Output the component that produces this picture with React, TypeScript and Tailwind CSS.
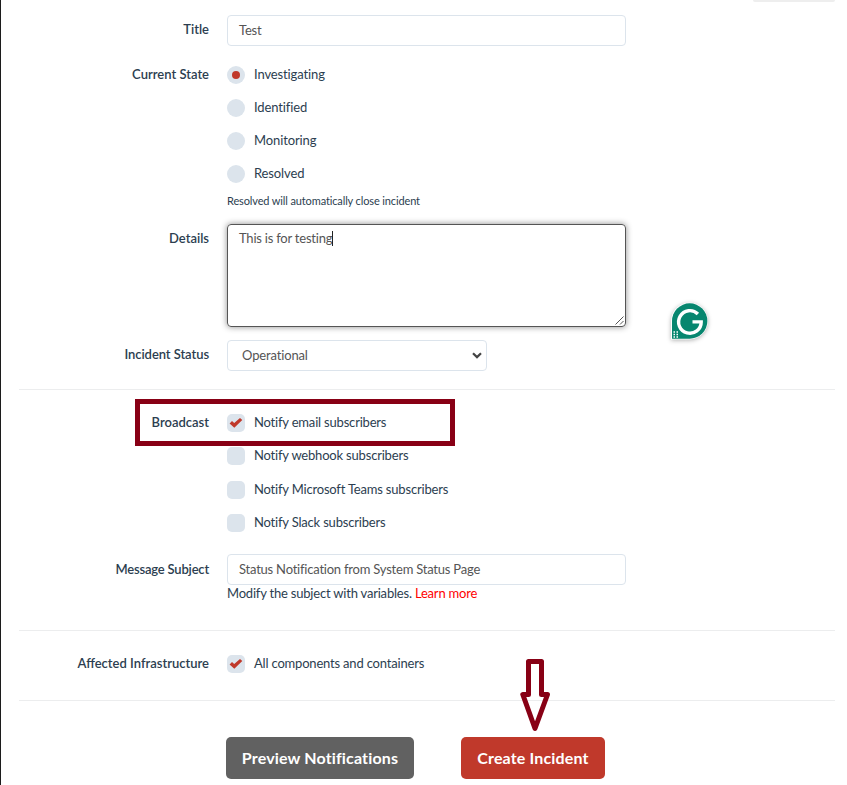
import React, { useState } from "react";

const STATES = ["Investigating", "Identified", "Monitoring", "Resolved"];

const CHANNELS: { id: string; label: string; row: string }[] = [
  { id: "email",   label: "Notify email subscribers",           row: "h-[33px]" },
  { id: "webhook", label: "Notify webhook subscribers",         row: "h-[34px]" },
  { id: "teams",   label: "Notify Microsoft Teams subscribers", row: "h-[33px]" },
  { id: "slack",   label: "Notify Slack subscribers",           row: "h-[18px]" },
];

function Row({ label, labelCls, className, children }: {
  label: string;
  labelCls: string;
  className: string;
  children: React.ReactNode;
}) {
  return (
    <div className={`flex items-start gap-[18px] ${className}`}>
      <div className={`w-[208px] flex-shrink-0 text-right font-semibold leading-[18px] text-[#2c3e50] ${labelCls}`}>
        {label}
      </div>
      <div>{children}</div>
    </div>
  );
}

function Radio({ label, checked, onSelect }: { label: string; checked: boolean; onSelect: () => void }) {
  return (
    <button type="button" role="radio" aria-checked={checked} onClick={onSelect} className="flex items-start gap-[9px] h-[33px]">
      <span className="flex items-center justify-center w-[18px] h-[18px] rounded-full bg-[#dce4ec]">
        {checked && <span className="w-2 h-2 rounded-full bg-[#c0392b]" />}
      </span>
      <span className="-mt-px leading-[18px] tracking-[-0.12px]">{label}</span>
    </button>
  );
}

function Check({ label, checked, onToggle, className }: {
  label: string;
  checked: boolean;
  onToggle: () => void;
  className: string;
}) {
  return (
    <button type="button" role="checkbox" aria-checked={checked} onClick={onToggle} className={`flex items-start gap-[9px] ${className}`}>
      <span className="flex items-center justify-center w-[18px] h-[18px] rounded-[5px] bg-[#dce4ec]">
        {checked && (
          <svg width="14" height="12" viewBox="0 0 14 12">
            <path d="M0.6 6.4 3 4.1 5.2 6 11 0.9 13.3 3 5.3 10.8Z" fill="#c0392b" />
          </svg>
        )}
      </span>
      <span className="-mt-px leading-[18px] tracking-[-0.19px]">{label}</span>
    </button>
  );
}

export default function App() {
  const [state, setState] = useState("Investigating");
  const [channels, setChannels] = useState<string[]>(["email"]);
  const [all, setAll] = useState(true);

  const toggle = (id: string) =>
    setChannels(c => (c.includes(id) ? c.filter(x => x !== id) : [...c, id]));

  return (
    <div className="relative w-[847px] h-[785px] overflow-hidden border-l border-[#1c1c1c] bg-white font-['Lato',sans-serif] text-[13px] text-[#2c3e50]">
      <div className="ml-[752px] w-[82px] h-[2px] rounded-b-sm bg-[#eeeeee]" />

      <Row label="Title" labelCls="mt-[5px]" className="mt-[13px] h-[51px]">
        <div className="flex items-center w-[399px] h-[31px] px-[11px] rounded border border-[#dce4ec] text-[#555555] tracking-[-0.2px]">Test</div>
      </Row>

      <Row label="Current State" labelCls="-mt-px" className="h-[158px]">
        {STATES.map(s => (
          <Radio key={s} label={s} checked={state === s} onSelect={() => setState(s)} />
        ))}
        <p className="-mt-[5px] text-[11px] leading-[16px] tracking-[-0.13px]">Resolved will automatically close incident</p>
      </Row>

      <Row label="Details" labelCls="mt-[5px]" className="h-[116px]">
        <div className="flex w-[399px] h-[103px] px-[11px] pt-[4px] rounded border border-[#555555] shadow-[0_0_6px_rgba(0,0,0,0.45)] text-[#555555]">
          <span className="leading-[18px] tracking-[-0.22px]">This is for testing</span>
          <span className="w-px h-[15px] mt-[2px] bg-[#222222]" />
          <svg className="ml-auto mt-auto -mr-[10px] mb-px" width="9" height="9" viewBox="0 0 9 9">
            <path d="M0.5 8.5 8.5 0.5M5 8.5 8.5 5" stroke="#555555" strokeWidth="1" />
          </svg>
        </div>
      </Row>

      <Row label="Incident Status" labelCls="mt-[5px] tracking-[-0.07px]" className="h-[49px]">
        <div className="flex items-center justify-between w-[260px] h-[31px] pl-[14px] pr-1 rounded border border-[#dce4ec] text-[#555555] tracking-[-0.15px]">
          Operational
          <svg width="10" height="7" viewBox="0 0 10 7" fill="none">
            <path d="M1 1.2 5 5.1 9 1.2" stroke="#444444" strokeWidth="2.2" />
          </svg>
        </div>
      </Row>
      <div className="ml-[18px] w-[816px] h-px bg-[#ecedee]" />

      <Row label="Broadcast" labelCls="-mt-px" className="mt-6 h-[140px]">
        {CHANNELS.map(c => (
          <Check key={c.id} label={c.label} checked={channels.includes(c.id)} onToggle={() => toggle(c.id)} className={c.row} />
        ))}
      </Row>

      <Row label="Message Subject" labelCls="mt-[6px] tracking-[-0.18px]" className="h-[76px]">
        <div className="flex items-center w-[399px] h-[31px] px-[11px] rounded border border-[#dce4ec] text-[#555555] tracking-[-0.22px]">
          Status Notification from System Status Page
        </div>
        <p className="-mt-px leading-[18px] tracking-[-0.2px]">
          Modify the subject with variables. <a className="text-[#ff0000]">Learn more</a>
        </p>
      </Row>
      <div className="ml-[18px] w-[816px] h-px bg-[#ecedee]" />

      <Row label="Affected Infrastructure" labelCls="-mt-px" className="mt-6 h-[45px]">
        <Check label="All components and containers" checked={all} onToggle={() => setAll(!all)} className="h-[18px]" />
      </Row>
      <div className="ml-[18px] w-[816px] h-px bg-[#ecedee]" />

      <div className="flex gap-[47px] mt-9 ml-[225px] text-[16px] font-bold tracking-[0.15px] text-white">
        <button className="w-[188px] h-[42px] rounded-[5px] bg-[#616161]">Preview Notifications</button>
        <button className="w-[144px] h-[42px] rounded-[5px] bg-[#c0392b]">Create Incident</button>
      </div>

      {/* Callout around the email option */}
      <div className="absolute left-[134px] top-[399px] w-[320px] h-[47px] border-5 border-[#880015] pointer-events-none" />

      {/* Arrow pointing at the create button */}
      <svg className="absolute left-[519px] top-[658px]" width="32" height="74" viewBox="0 0 32 74">
        <path d="M8.5 3.5H21.5V36.5H27.5L15 70.5 2.8 36.5H8.5Z" fill="none" stroke="#880015" strokeWidth="5" strokeLinejoin="round" />
      </svg>

      {/* Writing assistant badge */}
      <svg className="absolute left-[663px] top-[296px] drop-shadow-[0_1px_2px_rgba(0,0,0,0.3)]" width="50" height="50" viewBox="0 0 50 50">
        <path d="M7 25A18.5 18.5 0 1 1 25.5 43.5H7Z" fill="#ffffff" />
        <path d="M8 25A17.7 17.7 0 1 1 25.7 42.7H8Z" fill="#07866f" />
        <path d="M33.9 18A11.3 11.3 0 1 0 37.2 25.9H28.5" fill="none" stroke="#ffffff" strokeWidth="3.4" />
        <path d="M9.5 36h1.5M12.5 36h1.5M9.5 38.5h1.5M12.5 38.5h1.5M9.5 41h1.5M12.5 41h1.5" stroke="#ffffff" strokeWidth="1.3" />
      </svg>
    </div>
  );
}
